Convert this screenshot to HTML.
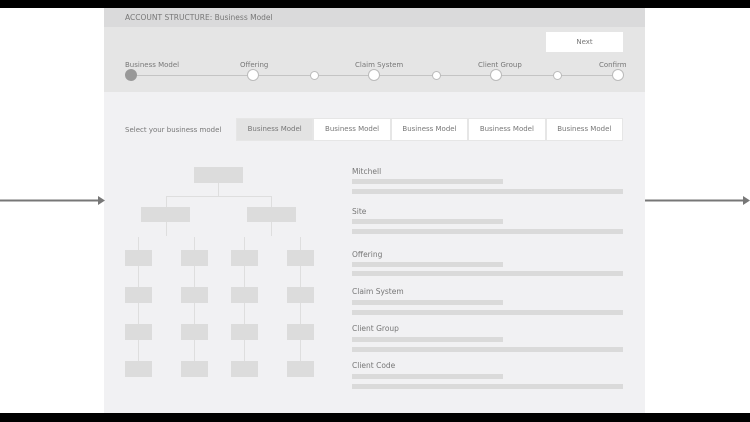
<!DOCTYPE html><html><head><style>
*{margin:0;padding:0;box-sizing:border-box}
body{width:750px;height:422px;background:#fff;position:relative;overflow:hidden;font-family:"DejaVu Sans","Liberation Sans",sans-serif;color:#777}
.a{position:absolute}
.t{font-size:7px;white-space:nowrap}
.bx{position:absolute;background:#dcdcdc}
.ln{position:absolute;background:#dedede}
.bar{position:absolute;background:#dadada;height:5px}
.tab{position:absolute;top:118px;height:23px;width:77.4px;background:#fff;border:1px solid #e6e6e6;font-size:7px;line-height:21px;text-align:center;color:#777}
.c{position:absolute;border-radius:50%;background:#fff;border:1px solid #bbb}
</style></head><body>
<div class="a" style="left:0;top:0;width:750px;height:8px;background:#000"></div>
<div class="a" style="left:0;top:413px;width:750px;height:9px;background:#000"></div>
<div class="a" style="left:104px;top:8px;width:541px;height:405px;background:#f1f1f3"></div>
<div class="a" style="left:104px;top:8px;width:541px;height:19px;background:#dadadb"></div>
<div class="a" style="left:104px;top:27px;width:541px;height:65px;background:#e5e5e5"></div>
<div class="a t" style="left:125px;top:13px;font-size:7.5px;color:#777">ACCOUNT STRUCTURE: Business Model</div>
<div class="a" style="left:546px;top:32px;width:77px;height:20px;background:#fff;font-size:7px;text-align:center;line-height:20px;color:#777">Next</div>
<div class="a" style="left:131px;top:75px;width:487px;height:1px;background:#c4c4c4"></div>
<div class="a t" style="left:125px;top:61px">Business Model</div>
<div class="a t" style="left:240px;top:61px">Offering</div>
<div class="a t" style="left:355px;top:61px">Claim System</div>
<div class="a t" style="left:478px;top:61px">Client Group</div>
<div class="a t" style="left:599px;top:61px">Confirm</div>
<div class="c" style="left:125px;top:69px;width:12px;height:12px;background:#999;border-color:#999"></div>
<div class="c" style="left:247px;top:69px;width:12px;height:12px"></div>
<div class="c" style="left:368px;top:69px;width:12px;height:12px"></div>
<div class="c" style="left:490px;top:69px;width:12px;height:12px"></div>
<div class="c" style="left:612px;top:69px;width:12px;height:12px"></div>
<div class="c" style="left:310px;top:71px;width:9px;height:9px"></div>
<div class="c" style="left:432px;top:71px;width:9px;height:9px"></div>
<div class="c" style="left:553px;top:71px;width:9px;height:9px"></div>
<div class="a t" style="left:125px;top:126px">Select your business model</div>
<div class="tab" style="left:236px;background:#e3e3e3">Business Model</div>
<div class="tab" style="left:313.4px">Business Model</div>
<div class="tab" style="left:390.8px">Business Model</div>
<div class="tab" style="left:468.2px">Business Model</div>
<div class="tab" style="left:545.6px">Business Model</div>
<!-- tree -->
<div class="bx" style="left:194px;top:167px;width:49px;height:16px"></div>
<div class="ln" style="left:218px;top:183px;width:1px;height:13px"></div>
<div class="ln" style="left:166px;top:196px;width:106px;height:1px"></div>
<div class="ln" style="left:166px;top:196px;width:1px;height:11px"></div>
<div class="ln" style="left:271px;top:196px;width:1px;height:11px"></div>
<div class="bx" style="left:141px;top:207px;width:49px;height:15px"></div>
<div class="bx" style="left:247px;top:207px;width:49px;height:15px"></div>
<div class="ln" style="left:166px;top:222px;width:1px;height:14px"></div>
<div class="ln" style="left:271px;top:222px;width:1px;height:14px"></div>
<div class="ln" style="left:138px;top:237px;width:1px;height:128px"></div>
<div class="ln" style="left:194px;top:237px;width:1px;height:128px"></div>
<div class="ln" style="left:244px;top:237px;width:1px;height:128px"></div>
<div class="ln" style="left:300px;top:237px;width:1px;height:128px"></div>
<div class="bx" style="left:125px;top:250px;width:27px;height:16px"></div><div class="bx" style="left:181px;top:250px;width:27px;height:16px"></div><div class="bx" style="left:231px;top:250px;width:27px;height:16px"></div><div class="bx" style="left:287px;top:250px;width:27px;height:16px"></div>
<div class="bx" style="left:125px;top:287px;width:27px;height:16px"></div><div class="bx" style="left:181px;top:287px;width:27px;height:16px"></div><div class="bx" style="left:231px;top:287px;width:27px;height:16px"></div><div class="bx" style="left:287px;top:287px;width:27px;height:16px"></div>
<div class="bx" style="left:125px;top:324px;width:27px;height:16px"></div><div class="bx" style="left:181px;top:324px;width:27px;height:16px"></div><div class="bx" style="left:231px;top:324px;width:27px;height:16px"></div><div class="bx" style="left:287px;top:324px;width:27px;height:16px"></div>
<div class="bx" style="left:125px;top:361px;width:27px;height:16px"></div><div class="bx" style="left:181px;top:361px;width:27px;height:16px"></div><div class="bx" style="left:231px;top:361px;width:27px;height:16px"></div><div class="bx" style="left:287px;top:361px;width:27px;height:16px"></div>
<!-- fields -->
<div class="a t" style="left:352px;top:167px;font-size:7.5px">Mitchell</div>
<div class="bar" style="left:352px;top:179px;width:151px"></div><div class="bar" style="left:352px;top:189px;width:271px"></div>
<div class="a t" style="left:352px;top:207px;font-size:7.5px">Site</div>
<div class="bar" style="left:352px;top:219px;width:151px"></div><div class="bar" style="left:352px;top:229px;width:271px"></div>
<div class="a t" style="left:352px;top:250px;font-size:7.5px">Offering</div>
<div class="bar" style="left:352px;top:262px;width:151px"></div><div class="bar" style="left:352px;top:271px;width:271px"></div>
<div class="a t" style="left:352px;top:287px;font-size:7.5px">Claim System</div>
<div class="bar" style="left:352px;top:300px;width:151px"></div><div class="bar" style="left:352px;top:310px;width:271px"></div>
<div class="a t" style="left:352px;top:324px;font-size:7.5px">Client Group</div>
<div class="bar" style="left:352px;top:337px;width:151px"></div><div class="bar" style="left:352px;top:347px;width:271px"></div>
<div class="a t" style="left:352px;top:361px;font-size:7.5px">Client Code</div>
<div class="bar" style="left:352px;top:374px;width:151px"></div><div class="bar" style="left:352px;top:384px;width:271px"></div>
<!-- arrows -->
<svg class="a" style="left:0;top:194px" width="106" height="13"><line x1="0" y1="6.5" x2="99" y2="6.5" stroke="#777" stroke-width="2"/><polygon points="98,2 105,6.5 98,11" fill="#777"/></svg>
<svg class="a" style="left:645px;top:194px" width="105" height="13"><line x1="0" y1="6.5" x2="99" y2="6.5" stroke="#777" stroke-width="2"/><polygon points="98,2 105,6.5 98,11" fill="#777"/></svg>
</body></html>
